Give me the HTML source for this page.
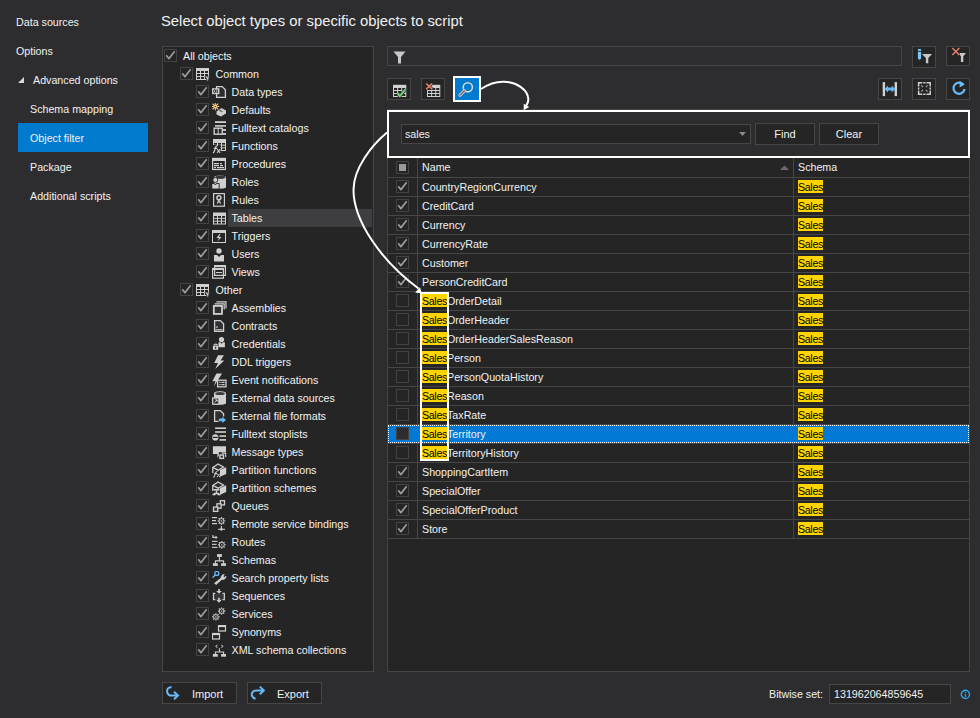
<!DOCTYPE html>
<html><head><meta charset="utf-8"><style>
html,body{margin:0;padding:0;}
body{width:980px;height:718px;background:#2d2d30;position:relative;overflow:hidden;font-family:"Liberation Sans",sans-serif;font-size:11px;color:#f1f1f1;}
.abs{position:absolute;}
.t{position:absolute;font-size:10.7px;line-height:13px;white-space:nowrap;}
.title{position:absolute;font-size:14.8px;line-height:18px;white-space:nowrap;color:#f1f1f1;}
.navsel{position:absolute;background:#007acc;}
.panel{position:absolute;background:#252526;border:1px solid #464647;}
.grid{position:absolute;background:#252526;border:1px solid #464647;}
.box{position:absolute;border:1px solid #464647;}
.cb{position:absolute;width:11px;height:11px;border:1px solid #434346;}
.cb svg{position:absolute;left:-1px;top:-1px;}
.ic{position:absolute;width:14px;height:14px;}
.ic svg{display:block;}
.btn{position:absolute;background:#252526;border:1px solid #464647;}
.btn svg{position:absolute;left:3px;top:3px;}
.pbtn{position:absolute;background:#252526;border:1px solid #464647;text-align:center;line-height:19px;}
</style></head><body>
<div class="navsel" style="left:18px;top:123px;width:130px;height:29px"></div>
<svg class="abs" style="left:17px;top:76px" width="8" height="8"><path d="M1 7 L7 7 L7 1 Z" fill="#d8d8d8"/></svg>
<div class="t" style="left:16px;top:16px;">Data sources</div>
<div class="t" style="left:16px;top:45px;">Options</div>
<div class="t" style="left:33px;top:74px;">Advanced options</div>
<div class="t" style="left:30px;top:103px;">Schema mapping</div>
<div class="t" style="left:30px;top:132px;">Object filter</div>
<div class="t" style="left:30px;top:161px;">Package</div>
<div class="t" style="left:30px;top:190px;">Additional scripts</div>
<div class="title" style="left:161px;top:12px">Select object types or specific objects to script</div>
<div class="panel" style="left:162px;top:46px;width:210px;height:624px"></div>
<div class="abs" style="left:228px;top:209px;width:144px;height:18px;background:#3e3e40"></div>
<div class="cb" style="left:164px;top:49px"><svg width="13" height="13" viewBox="0 0 13 13"><path d="M2.6 6.8 L4.9 9.6 L10.3 2.8" fill="none" stroke="#9c9c9c" stroke-width="1.7" stroke-linecap="round" stroke-linejoin="round"/></svg></div>
<div class="t" style="left:183px;top:50px;">All objects</div>
<div class="cb" style="left:180px;top:67px"><svg width="13" height="13" viewBox="0 0 13 13"><path d="M2.6 6.8 L4.9 9.6 L10.3 2.8" fill="none" stroke="#9c9c9c" stroke-width="1.7" stroke-linecap="round" stroke-linejoin="round"/></svg></div>
<div class="ic" style="left:196px;top:67px" data-i="Common"><svg width="16" height="16" viewBox="0 0 16 16"><rect x="0" y="1" width="13" height="12" fill="#d0d0d0"/><rect x="1.00" y="4.00" width="3.00" height="2.00" fill="#252526"/><rect x="5.00" y="4.00" width="3.00" height="2.00" fill="#252526"/><rect x="9.00" y="4.00" width="3.00" height="2.00" fill="#252526"/><rect x="1.00" y="7.00" width="3.00" height="2.00" fill="#252526"/><rect x="5.00" y="7.00" width="3.00" height="2.00" fill="#252526"/><rect x="9.00" y="7.00" width="3.00" height="2.00" fill="#252526"/><rect x="1.00" y="10.00" width="3.00" height="2.00" fill="#252526"/><rect x="5.00" y="10.00" width="3.00" height="2.00" fill="#252526"/><rect x="9.00" y="10.00" width="3.00" height="2.00" fill="#252526"/><path d="M8.8 9.8 H14.2 L12.3 12 V14.2 H10.7 V12 Z" fill="#d0d0d0" stroke="#252526" stroke-width="0.8"/></svg></div>
<div class="t" style="left:215.5px;top:68px;">Common</div>
<div class="cb" style="left:196px;top:85px"><svg width="13" height="13" viewBox="0 0 13 13"><path d="M2.6 6.8 L4.9 9.6 L10.3 2.8" fill="none" stroke="#9c9c9c" stroke-width="1.7" stroke-linecap="round" stroke-linejoin="round"/></svg></div>
<div class="ic" style="left:212px;top:85px" data-i="Data types"><svg width="16" height="16" viewBox="0 0 16 16"><path d="M4.6 1.6 H10.2 L13.4 4.8 V12.4 H4.6 Z" fill="#2c2c30" stroke="#d0d0d0" stroke-width="1.3"/><rect x="0" y="3.2" width="7.4" height="6" fill="#d0d0d0"/><ellipse cx="2.6" cy="6.2" rx="1" ry="1.7" fill="none" stroke="#252526" stroke-width="1"/><rect x="4.6" y="4.4" width="1.1" height="3.6" fill="#252526"/></svg></div>
<div class="t" style="left:231.5px;top:86px;">Data types</div>
<div class="cb" style="left:196px;top:103px"><svg width="13" height="13" viewBox="0 0 13 13"><path d="M2.6 6.8 L4.9 9.6 L10.3 2.8" fill="none" stroke="#9c9c9c" stroke-width="1.7" stroke-linecap="round" stroke-linejoin="round"/></svg></div>
<div class="ic" style="left:212px;top:103px" data-i="Defaults"><svg width="16" height="16" viewBox="0 0 16 16"><g stroke="#f2c27a" stroke-width="1.1" stroke-linecap="round"><path d="M3.3 0 V7 M-0.2 3.5 H6.8 M0.8 1 L5.8 6 M5.8 1 L0.8 6"/></g><circle cx="3.3" cy="3.5" r="1.5" fill="#f2c27a"/><circle cx="3.3" cy="3.5" r="0.6" fill="#252526"/><path d="M4.5 8.5 L9.5 5 L14 7.5 V10.5 L9 13.5 L4.5 11.5 Z" fill="#d0d0d0"/><path d="M8 6.5 L11 8.2 L9.5 9.2 L6.8 7.6 Z" fill="#707070"/></svg></div>
<div class="t" style="left:231.5px;top:104px;">Defaults</div>
<div class="cb" style="left:196px;top:121px"><svg width="13" height="13" viewBox="0 0 13 13"><path d="M2.6 6.8 L4.9 9.6 L10.3 2.8" fill="none" stroke="#9c9c9c" stroke-width="1.7" stroke-linecap="round" stroke-linejoin="round"/></svg></div>
<div class="ic" style="left:212px;top:121px" data-i="Fulltext catalogs"><svg width="16" height="16" viewBox="0 0 16 16"><rect x="3" y="0.2" width="11" height="1.8" fill="#d0d0d0"/><rect x="3" y="4.1" width="11" height="1.6" fill="#d0d0d0"/><rect x="10" y="8.1" width="4" height="1.8" fill="#d0d0d0"/><rect x="10" y="12" width="4" height="1.8" fill="#d0d0d0"/><rect x="1.5" y="6.5" width="9" height="7" fill="#252526"/><rect x="2.2" y="7.2" width="8" height="6" fill="none" stroke="#d0d0d0" stroke-width="1.4"/><path d="M6.2 6.8 V14" stroke="#d0d0d0" stroke-width="1"/></svg></div>
<div class="t" style="left:231.5px;top:122px;">Fulltext catalogs</div>
<div class="cb" style="left:196px;top:139px"><svg width="13" height="13" viewBox="0 0 13 13"><path d="M2.6 6.8 L4.9 9.6 L10.3 2.8" fill="none" stroke="#9c9c9c" stroke-width="1.7" stroke-linecap="round" stroke-linejoin="round"/></svg></div>
<div class="ic" style="left:212px;top:139px" data-i="Functions"><svg width="16" height="16" viewBox="0 0 16 16"><rect x="1" y="0" width="13" height="12" fill="#d0d0d0"/><rect x="2.00" y="4.00" width="3.00" height="1.67" fill="#252526"/><rect x="6.00" y="4.00" width="3.00" height="1.67" fill="#252526"/><rect x="10.00" y="4.00" width="3.00" height="1.67" fill="#252526"/><rect x="2.00" y="6.67" width="3.00" height="1.67" fill="#252526"/><rect x="6.00" y="6.67" width="3.00" height="1.67" fill="#252526"/><rect x="10.00" y="6.67" width="3.00" height="1.67" fill="#252526"/><rect x="2.00" y="9.33" width="3.00" height="1.67" fill="#252526"/><rect x="6.00" y="9.33" width="3.00" height="1.67" fill="#252526"/><rect x="10.00" y="9.33" width="3.00" height="1.67" fill="#252526"/><rect x="0" y="6" width="8.5" height="8" fill="#252526"/><path d="M1 14 C2.3 13.5 2.8 11 3.3 9 C3.7 7.3 4.3 6.5 6 6.5 M1.8 9.3 H5.2" fill="none" stroke="#d0d0d0" stroke-width="1.2"/><path d="M5 10 L8.2 13.8 M8.2 10 L5 13.8" stroke="#d0d0d0" stroke-width="1.1"/></svg></div>
<div class="t" style="left:231.5px;top:140px;">Functions</div>
<div class="cb" style="left:196px;top:157px"><svg width="13" height="13" viewBox="0 0 13 13"><path d="M2.6 6.8 L4.9 9.6 L10.3 2.8" fill="none" stroke="#9c9c9c" stroke-width="1.7" stroke-linecap="round" stroke-linejoin="round"/></svg></div>
<div class="ic" style="left:212px;top:157px" data-i="Procedures"><svg width="16" height="16" viewBox="0 0 16 16"><rect x="0.6" y="1.5" width="12.8" height="11" fill="none" stroke="#d0d0d0" stroke-width="1.2"/><rect x="0" y="0.9" width="14" height="3.1" fill="#d0d0d0"/><rect x="2" y="6" width="5" height="1.2" fill="#d0d0d0"/><rect x="8" y="6" width="2" height="1.2" fill="#d0d0d0"/><rect x="2" y="8" width="5" height="1.2" fill="#d0d0d0"/><rect x="8" y="8" width="3" height="1.2" fill="#d0d0d0"/><rect x="2" y="10" width="2" height="1.2" fill="#d0d0d0"/><rect x="5" y="10" width="7" height="1.2" fill="#d0d0d0"/></svg></div>
<div class="t" style="left:231.5px;top:158px;">Procedures</div>
<div class="cb" style="left:196px;top:175px"><svg width="13" height="13" viewBox="0 0 13 13"><path d="M2.6 6.8 L4.9 9.6 L10.3 2.8" fill="none" stroke="#9c9c9c" stroke-width="1.7" stroke-linecap="round" stroke-linejoin="round"/></svg></div>
<div class="ic" style="left:212px;top:175px" data-i="Roles"><svg width="16" height="16" viewBox="0 0 16 16"><path d="M2 2.4 C2 -0.3 14 -0.3 14 2.4 V12 C14 14.3 2 14.3 2 12 Z" fill="#d0d0d0"/><ellipse cx="8.4" cy="2.2" rx="5" ry="1.7" fill="#38383c"/><circle cx="3.3" cy="5" r="2.5" fill="#d0d0d0" stroke="#252526" stroke-width="0.9"/><path d="M-0.2 8.5 H2.4 L3.4 10 L4.4 8.5 H7.2 V14 H-0.2 Z" fill="#d0d0d0" stroke="#252526" stroke-width="0.9"/></svg></div>
<div class="t" style="left:231.5px;top:176px;">Roles</div>
<div class="cb" style="left:196px;top:193px"><svg width="13" height="13" viewBox="0 0 13 13"><path d="M2.6 6.8 L4.9 9.6 L10.3 2.8" fill="none" stroke="#9c9c9c" stroke-width="1.7" stroke-linecap="round" stroke-linejoin="round"/></svg></div>
<div class="ic" style="left:212px;top:193px" data-i="Rules"><svg width="16" height="16" viewBox="0 0 16 16"><rect x="1.6" y="0.6" width="10.8" height="12.6" fill="none" stroke="#d0d0d0" stroke-width="1.2"/><circle cx="6.9" cy="4.8" r="2" fill="none" stroke="#d0d0d0" stroke-width="1.5"/><path d="M5.9 6.8 L4.6 11.4 L6.9 9.6 L9.2 11.4 L7.9 6.8 Z" fill="#b8b8b8"/></svg></div>
<div class="t" style="left:231.5px;top:194px;">Rules</div>
<div class="cb" style="left:196px;top:211px"><svg width="13" height="13" viewBox="0 0 13 13"><path d="M2.6 6.8 L4.9 9.6 L10.3 2.8" fill="none" stroke="#9c9c9c" stroke-width="1.7" stroke-linecap="round" stroke-linejoin="round"/></svg></div>
<div class="ic" style="left:212px;top:211px" data-i="Tables"><svg width="16" height="16" viewBox="0 0 16 16"><rect x="1" y="1.5" width="13" height="12" fill="#d0d0d0"/><rect x="2.00" y="5.00" width="3.00" height="1.83" fill="#252526"/><rect x="6.00" y="5.00" width="3.00" height="1.83" fill="#252526"/><rect x="10.00" y="5.00" width="3.00" height="1.83" fill="#252526"/><rect x="2.00" y="7.83" width="3.00" height="1.83" fill="#252526"/><rect x="6.00" y="7.83" width="3.00" height="1.83" fill="#252526"/><rect x="10.00" y="7.83" width="3.00" height="1.83" fill="#252526"/><rect x="2.00" y="10.67" width="3.00" height="1.83" fill="#252526"/><rect x="6.00" y="10.67" width="3.00" height="1.83" fill="#252526"/><rect x="10.00" y="10.67" width="3.00" height="1.83" fill="#252526"/></svg></div>
<div class="t" style="left:231.5px;top:212px;">Tables</div>
<div class="cb" style="left:196px;top:229px"><svg width="13" height="13" viewBox="0 0 13 13"><path d="M2.6 6.8 L4.9 9.6 L10.3 2.8" fill="none" stroke="#9c9c9c" stroke-width="1.7" stroke-linecap="round" stroke-linejoin="round"/></svg></div>
<div class="ic" style="left:212px;top:229px" data-i="Triggers"><svg width="16" height="16" viewBox="0 0 16 16"><rect x="0.5" y="1.5" width="13" height="12" fill="none" stroke="#d0d0d0"/><rect x="0.5" y="1.5" width="13" height="2.5" fill="#d0d0d0"/><path d="M7.5 5 L4.5 9 H7 L5.5 12.5 L9.5 8 H7 L8.5 5 Z" fill="#d0d0d0"/></svg></div>
<div class="t" style="left:231.5px;top:230px;">Triggers</div>
<div class="cb" style="left:196px;top:247px"><svg width="13" height="13" viewBox="0 0 13 13"><path d="M2.6 6.8 L4.9 9.6 L10.3 2.8" fill="none" stroke="#9c9c9c" stroke-width="1.7" stroke-linecap="round" stroke-linejoin="round"/></svg></div>
<div class="ic" style="left:212px;top:247px" data-i="Users"><svg width="16" height="16" viewBox="0 0 16 16"><circle cx="7" cy="4" r="2.7" fill="#d0d0d0"/><path d="M2 8 H5 L7 10 L9 8 H12 V14.5 H2 Z" fill="#d0d0d0"/></svg></div>
<div class="t" style="left:231.5px;top:248px;">Users</div>
<div class="cb" style="left:196px;top:265px"><svg width="13" height="13" viewBox="0 0 13 13"><path d="M2.6 6.8 L4.9 9.6 L10.3 2.8" fill="none" stroke="#9c9c9c" stroke-width="1.7" stroke-linecap="round" stroke-linejoin="round"/></svg></div>
<div class="ic" style="left:212px;top:265px" data-i="Views"><svg width="16" height="16" viewBox="0 0 16 16"><rect x="2.6" y="0.6" width="10.8" height="9.8" fill="none" stroke="#d0d0d0" stroke-width="1.2"/><rect x="2" y="0" width="12" height="2.2" fill="#d0d0d0"/><rect x="0.6" y="3.6" width="10.8" height="9.6" fill="none" stroke="#d0d0d0" stroke-width="1.2"/><rect x="0" y="3" width="12" height="2" fill="#d0d0d0"/><rect x="4" y="7" width="6" height="1.1" fill="#d0d0d0"/></svg></div>
<div class="t" style="left:231.5px;top:266px;">Views</div>
<div class="cb" style="left:180px;top:283px"><svg width="13" height="13" viewBox="0 0 13 13"><path d="M2.6 6.8 L4.9 9.6 L10.3 2.8" fill="none" stroke="#9c9c9c" stroke-width="1.7" stroke-linecap="round" stroke-linejoin="round"/></svg></div>
<div class="ic" style="left:196px;top:283px" data-i="Other"><svg width="16" height="16" viewBox="0 0 16 16"><rect x="0" y="1" width="13" height="12" fill="#d0d0d0"/><rect x="1.00" y="4.00" width="3.00" height="2.00" fill="#252526"/><rect x="5.00" y="4.00" width="3.00" height="2.00" fill="#252526"/><rect x="9.00" y="4.00" width="3.00" height="2.00" fill="#252526"/><rect x="1.00" y="7.00" width="3.00" height="2.00" fill="#252526"/><rect x="5.00" y="7.00" width="3.00" height="2.00" fill="#252526"/><rect x="9.00" y="7.00" width="3.00" height="2.00" fill="#252526"/><rect x="1.00" y="10.00" width="3.00" height="2.00" fill="#252526"/><rect x="5.00" y="10.00" width="3.00" height="2.00" fill="#252526"/><rect x="9.00" y="10.00" width="3.00" height="2.00" fill="#252526"/><path d="M8.8 9.8 H14.2 L12.3 12 V14.2 H10.7 V12 Z" fill="#d0d0d0" stroke="#252526" stroke-width="0.8"/></svg></div>
<div class="t" style="left:215.5px;top:284px;">Other</div>
<div class="cb" style="left:196px;top:301px"><svg width="13" height="13" viewBox="0 0 13 13"><path d="M2.6 6.8 L4.9 9.6 L10.3 2.8" fill="none" stroke="#9c9c9c" stroke-width="1.7" stroke-linecap="round" stroke-linejoin="round"/></svg></div>
<div class="ic" style="left:212px;top:301px" data-i="Assemblies"><svg width="16" height="16" viewBox="0 0 16 16"><path d="M4.4 0.9 H14 V7.6" fill="none" stroke="#d0d0d0" stroke-width="1.2"/><path d="M2.6 2.9 H12.2 V8.6" fill="none" stroke="#d0d0d0" stroke-width="1.2"/><rect x="1.8" y="4.9" width="8.2" height="8" fill="#303034" stroke="#d0d0d0" stroke-width="1.8"/></svg></div>
<div class="t" style="left:231.5px;top:302px;">Assemblies</div>
<div class="cb" style="left:196px;top:319px"><svg width="13" height="13" viewBox="0 0 13 13"><path d="M2.6 6.8 L4.9 9.6 L10.3 2.8" fill="none" stroke="#9c9c9c" stroke-width="1.7" stroke-linecap="round" stroke-linejoin="round"/></svg></div>
<div class="ic" style="left:212px;top:319px" data-i="Contracts"><svg width="16" height="16" viewBox="0 0 16 16"><path d="M2.6 1.6 H8.4 L11.6 4.8 V12.4 H2.6 Z" fill="#303034" stroke="#d0d0d0" stroke-width="1.3"/><rect x="3.9" y="7" width="2" height="2" fill="#8a8a8a"/><rect x="3.5" y="10.2" width="7.2" height="1.1" fill="#d0d0d0"/></svg></div>
<div class="t" style="left:231.5px;top:320px;">Contracts</div>
<div class="cb" style="left:196px;top:337px"><svg width="13" height="13" viewBox="0 0 13 13"><path d="M2.6 6.8 L4.9 9.6 L10.3 2.8" fill="none" stroke="#9c9c9c" stroke-width="1.7" stroke-linecap="round" stroke-linejoin="round"/></svg></div>
<div class="ic" style="left:212px;top:337px" data-i="Credentials"><svg width="16" height="16" viewBox="0 0 16 16"><circle cx="9.5" cy="2.6" r="2.6" fill="#d0d0d0"/><path d="M6.5 5.2 H8.3 L9.6 6.8 L10.9 5.2 H12.9 V10.2 H6.5 Z" fill="#d0d0d0"/><path d="M1.9 8.3 A1.9 1.7 0 0 1 5.5 8.3" fill="none" stroke="#d0d0d0" stroke-width="1.1"/><rect x="0.9" y="8.6" width="5.3" height="4.2" fill="#d0d0d0"/><rect x="3" y="9.8" width="1.2" height="1.8" fill="#252526"/></svg></div>
<div class="t" style="left:231.5px;top:338px;">Credentials</div>
<div class="cb" style="left:196px;top:355px"><svg width="13" height="13" viewBox="0 0 13 13"><path d="M2.6 6.8 L4.9 9.6 L10.3 2.8" fill="none" stroke="#9c9c9c" stroke-width="1.7" stroke-linecap="round" stroke-linejoin="round"/></svg></div>
<div class="ic" style="left:212px;top:355px" data-i="DDL triggers"><svg width="16" height="16" viewBox="0 0 16 16"><path d="M6 0.2 H11.9 L8.6 5.6 H12.3 L3.2 14 L6 8 H2.2 Z" fill="#d0d0d0"/></svg></div>
<div class="t" style="left:231.5px;top:356px;">DDL triggers</div>
<div class="cb" style="left:196px;top:373px"><svg width="13" height="13" viewBox="0 0 13 13"><path d="M2.6 6.8 L4.9 9.6 L10.3 2.8" fill="none" stroke="#9c9c9c" stroke-width="1.7" stroke-linecap="round" stroke-linejoin="round"/></svg></div>
<div class="ic" style="left:212px;top:373px" data-i="Event notifications"><svg width="16" height="16" viewBox="0 0 16 16"><path d="M4.4 0.4 H10 L7.2 5 L1.7 13.6 L3.6 8.2 H0.4 Z" fill="#d0d0d0"/><rect x="5.6" y="7.2" width="8.4" height="6.6" fill="#252526" stroke="#d0d0d0" stroke-width="1.3"/><rect x="7.3" y="8.8" width="1.3" height="1.2" fill="#d0d0d0"/><rect x="9.4" y="8.8" width="3.2" height="1.2" fill="#d0d0d0"/><rect x="7.3" y="11" width="1.3" height="1.2" fill="#d0d0d0"/><rect x="9.4" y="11" width="3.2" height="1.2" fill="#d0d0d0"/></svg></div>
<div class="t" style="left:231.5px;top:374px;">Event notifications</div>
<div class="cb" style="left:196px;top:391px"><svg width="13" height="13" viewBox="0 0 13 13"><path d="M2.6 6.8 L4.9 9.6 L10.3 2.8" fill="none" stroke="#9c9c9c" stroke-width="1.7" stroke-linecap="round" stroke-linejoin="round"/></svg></div>
<div class="ic" style="left:212px;top:391px" data-i="External data sources"><svg width="16" height="16" viewBox="0 0 16 16"><path d="M2 2.4 C2 -0.4 14 -0.4 14 2.4 V12 C14 14.4 2 14.4 2 12 Z" fill="#d0d0d0"/><ellipse cx="8" cy="2.5" rx="4.8" ry="1.5" fill="#3a3a3e"/><rect x="0.7" y="7" width="6.2" height="6.2" fill="#252526" stroke="#d0d0d0" stroke-width="1.3"/><path d="M2.6 11.4 L5 9 M3.2 8.8 H5.2 V10.8" fill="none" stroke="#d0d0d0" stroke-width="1"/></svg></div>
<div class="t" style="left:231.5px;top:392px;">External data sources</div>
<div class="cb" style="left:196px;top:409px"><svg width="13" height="13" viewBox="0 0 13 13"><path d="M2.6 6.8 L4.9 9.6 L10.3 2.8" fill="none" stroke="#9c9c9c" stroke-width="1.7" stroke-linecap="round" stroke-linejoin="round"/></svg></div>
<div class="ic" style="left:212px;top:409px" data-i="External file formats"><svg width="16" height="16" viewBox="0 0 16 16"><path d="M2.6 1.6 H8.4 L11.6 4.8 V8 H6.5 V12.4 H2.6 Z" fill="#303034"/><path d="M6.5 12.4 H2.6 V1.6 H8.4 L11.6 4.8 V7.5" fill="none" stroke="#d0d0d0" stroke-width="1.3"/><path d="M6.9 9.6 H10.3 V7.8 L14 10.9 L10.3 14 V12.2 H6.9 Z" fill="#6ab8f5"/></svg></div>
<div class="t" style="left:231.5px;top:410px;">External file formats</div>
<div class="cb" style="left:196px;top:427px"><svg width="13" height="13" viewBox="0 0 13 13"><path d="M2.6 6.8 L4.9 9.6 L10.3 2.8" fill="none" stroke="#9c9c9c" stroke-width="1.7" stroke-linecap="round" stroke-linejoin="round"/></svg></div>
<div class="ic" style="left:212px;top:427px" data-i="Fulltext stoplists"><svg width="16" height="16" viewBox="0 0 16 16"><rect x="3.1" y="0.4" width="10.9" height="1.6" fill="#d0d0d0"/><rect x="3.1" y="4.2" width="10.9" height="1.6" fill="#d0d0d0"/><rect x="7.5" y="8.3" width="6.5" height="1.6" fill="#d0d0d0"/><rect x="7.5" y="12.1" width="6.5" height="1.6" fill="#d0d0d0"/><circle cx="3.3" cy="10.4" r="3.6" fill="#252526"/><circle cx="3.3" cy="10.4" r="3.1" fill="#d0d0d0"/><rect x="0.8" y="9.8" width="5" height="1.2" fill="#252526"/></svg></div>
<div class="t" style="left:231.5px;top:428px;">Fulltext stoplists</div>
<div class="cb" style="left:196px;top:445px"><svg width="13" height="13" viewBox="0 0 13 13"><path d="M2.6 6.8 L4.9 9.6 L10.3 2.8" fill="none" stroke="#9c9c9c" stroke-width="1.7" stroke-linecap="round" stroke-linejoin="round"/></svg></div>
<div class="ic" style="left:212px;top:445px" data-i="Message types"><svg width="16" height="16" viewBox="0 0 16 16"><path d="M0.9 1.2 H14 V9.1 H8 L5.4 12.9 V9.1 H0.9 Z" fill="#d0d0d0"/><rect x="6.8" y="7.2" width="7.8" height="7" fill="#252526"/><path d="M9.8 8.1 H13.7 V12" fill="none" stroke="#d0d0d0" stroke-width="1.1"/><rect x="7.9" y="10" width="3.6" height="3.4" fill="none" stroke="#d0d0d0" stroke-width="1.4"/></svg></div>
<div class="t" style="left:231.5px;top:446px;">Message types</div>
<div class="cb" style="left:196px;top:463px"><svg width="13" height="13" viewBox="0 0 13 13"><path d="M2.6 6.8 L4.9 9.6 L10.3 2.8" fill="none" stroke="#9c9c9c" stroke-width="1.7" stroke-linecap="round" stroke-linejoin="round"/></svg></div>
<div class="ic" style="left:212px;top:463px" data-i="Partition functions"><svg width="16" height="16" viewBox="0 0 16 16"><path d="M0.8 4.5 L6 1 L11.5 4 L6.2 7.2 Z" fill="#303034" stroke="#d0d0d0" stroke-width="1.3"/><path d="M0.8 4.5 V10" stroke="#d0d0d0" stroke-width="1.3"/><path d="M8 7 L14.2 4.2 V11 L8 13.8 Z" fill="#d0d0d0"/><path d="M1.5 14.5 C2.5 13.8 3 11.5 3.5 10 C3.8 9 4.3 8.5 5.5 8.5 M2.3 10.6 H5" fill="none" stroke="#d0d0d0" stroke-width="1.1"/><path d="M5 10.5 L8 14.2 M8 10.5 L5 14.2" stroke="#d0d0d0" stroke-width="1"/></svg></div>
<div class="t" style="left:231.5px;top:464px;">Partition functions</div>
<div class="cb" style="left:196px;top:481px"><svg width="13" height="13" viewBox="0 0 13 13"><path d="M2.6 6.8 L4.9 9.6 L10.3 2.8" fill="none" stroke="#9c9c9c" stroke-width="1.7" stroke-linecap="round" stroke-linejoin="round"/></svg></div>
<div class="ic" style="left:212px;top:481px" data-i="Partition schemes"><svg width="16" height="16" viewBox="0 0 16 16"><path d="M0.8 4.5 L6 1 L11.5 4 L6.2 7.2 Z" fill="#303034" stroke="#d0d0d0" stroke-width="1.3"/><path d="M0.8 4.5 V10" stroke="#d0d0d0" stroke-width="1.3"/><path d="M8 7 L14.2 4.2 V11 L8 13.8 Z" fill="#d0d0d0"/><rect x="1.5" y="8" width="6" height="1.6" fill="#d0d0d0"/><path d="M4.5 9.5 V12.5 M2 12.5 H7" stroke="#d0d0d0" stroke-width="1.4" fill="none"/><rect x="0.5" y="12.5" width="3" height="1.8" fill="#d0d0d0"/><rect x="5.5" y="12.5" width="3" height="1.8" fill="#d0d0d0"/></svg></div>
<div class="t" style="left:231.5px;top:482px;">Partition schemes</div>
<div class="cb" style="left:196px;top:499px"><svg width="13" height="13" viewBox="0 0 13 13"><path d="M2.6 6.8 L4.9 9.6 L10.3 2.8" fill="none" stroke="#9c9c9c" stroke-width="1.7" stroke-linecap="round" stroke-linejoin="round"/></svg></div>
<div class="ic" style="left:212px;top:499px" data-i="Queues"><svg width="16" height="16" viewBox="0 0 16 16"><rect x="8.3" y="1.7" width="4.2" height="4.2" fill="none" stroke="#d0d0d0" stroke-width="1.3"/><rect x="4.9" y="4.8" width="4.2" height="4.4" fill="#303034" stroke="#d0d0d0" stroke-width="1.3"/><rect x="1.5" y="8.1" width="4.3" height="4.3" fill="#303034" stroke="#d0d0d0" stroke-width="1.3"/></svg></div>
<div class="t" style="left:231.5px;top:500px;">Queues</div>
<div class="cb" style="left:196px;top:517px"><svg width="13" height="13" viewBox="0 0 13 13"><path d="M2.6 6.8 L4.9 9.6 L10.3 2.8" fill="none" stroke="#9c9c9c" stroke-width="1.7" stroke-linecap="round" stroke-linejoin="round"/></svg></div>
<div class="ic" style="left:212px;top:517px" data-i="Remote service bindings"><svg width="16" height="16" viewBox="0 0 16 16"><rect x="0" y="0" width="5" height="1.2" fill="#d0d0d0"/><rect x="0" y="3" width="4" height="1.2" fill="#d0d0d0"/><rect x="0" y="6" width="5" height="1.2" fill="#d0d0d0"/><circle cx="9.4" cy="4" r="2.5" fill="none" stroke="#d0d0d0" stroke-width="1"/><line x1="12.10" y1="4.00" x2="13.30" y2="4.00" stroke="#d0d0d0" stroke-width="1.1"/><line x1="11.31" y1="5.91" x2="12.16" y2="6.76" stroke="#d0d0d0" stroke-width="1.1"/><line x1="9.40" y1="6.70" x2="9.40" y2="7.90" stroke="#d0d0d0" stroke-width="1.1"/><line x1="7.49" y1="5.91" x2="6.64" y2="6.76" stroke="#d0d0d0" stroke-width="1.1"/><line x1="6.70" y1="4.00" x2="5.50" y2="4.00" stroke="#d0d0d0" stroke-width="1.1"/><line x1="7.49" y1="2.09" x2="6.64" y2="1.24" stroke="#d0d0d0" stroke-width="1.1"/><line x1="9.40" y1="1.30" x2="9.40" y2="0.10" stroke="#d0d0d0" stroke-width="1.1"/><line x1="11.31" y1="2.09" x2="12.16" y2="1.24" stroke="#d0d0d0" stroke-width="1.1"/><circle cx="9.4" cy="4" r="0.9" fill="#9a9a9a"/><path d="M9.4 9 V13.5 M6 12.3 H13" stroke="#d0d0d0" stroke-width="1.1"/><circle cx="9.4" cy="12.2" r="1.2" fill="#d0d0d0"/></svg></div>
<div class="t" style="left:231.5px;top:518px;">Remote service bindings</div>
<div class="cb" style="left:196px;top:535px"><svg width="13" height="13" viewBox="0 0 13 13"><path d="M2.6 6.8 L4.9 9.6 L10.3 2.8" fill="none" stroke="#9c9c9c" stroke-width="1.7" stroke-linecap="round" stroke-linejoin="round"/></svg></div>
<div class="ic" style="left:212px;top:535px" data-i="Routes"><svg width="16" height="16" viewBox="0 0 16 16"><path d="M0.9 0 V2.4 H4" fill="none" stroke="#d0d0d0" stroke-width="1.1"/><path d="M3.6 0.5 L5.6 2.4 L3.6 4.3 Z" fill="#d0d0d0"/><rect x="0" y="5.8" width="5.5" height="1.1" fill="#d0d0d0"/><rect x="0" y="8.8" width="4.5" height="1.1" fill="#d0d0d0"/><rect x="0" y="11.8" width="5.5" height="1.1" fill="#d0d0d0"/><circle cx="9.8" cy="9.8" r="2.5" fill="none" stroke="#d0d0d0" stroke-width="1"/><line x1="12.50" y1="9.80" x2="13.70" y2="9.80" stroke="#d0d0d0" stroke-width="1.1"/><line x1="11.71" y1="11.71" x2="12.56" y2="12.56" stroke="#d0d0d0" stroke-width="1.1"/><line x1="9.80" y1="12.50" x2="9.80" y2="13.70" stroke="#d0d0d0" stroke-width="1.1"/><line x1="7.89" y1="11.71" x2="7.04" y2="12.56" stroke="#d0d0d0" stroke-width="1.1"/><line x1="7.10" y1="9.80" x2="5.90" y2="9.80" stroke="#d0d0d0" stroke-width="1.1"/><line x1="7.89" y1="7.89" x2="7.04" y2="7.04" stroke="#d0d0d0" stroke-width="1.1"/><line x1="9.80" y1="7.10" x2="9.80" y2="5.90" stroke="#d0d0d0" stroke-width="1.1"/><line x1="11.71" y1="7.89" x2="12.56" y2="7.04" stroke="#d0d0d0" stroke-width="1.1"/><circle cx="9.8" cy="9.8" r="0.9" fill="#9a9a9a"/></svg></div>
<div class="t" style="left:231.5px;top:536px;">Routes</div>
<div class="cb" style="left:196px;top:553px"><svg width="13" height="13" viewBox="0 0 13 13"><path d="M2.6 6.8 L4.9 9.6 L10.3 2.8" fill="none" stroke="#9c9c9c" stroke-width="1.7" stroke-linecap="round" stroke-linejoin="round"/></svg></div>
<div class="ic" style="left:212px;top:553px" data-i="Schemas"><svg width="16" height="16" viewBox="0 0 16 16"><rect x="5" y="1.1" width="4.9" height="2.8" fill="#d0d0d0"/><path d="M7.4 3.8 V7.9 M3.4 7.9 H11.6 M3.4 7.4 V10.4 M11.6 7.4 V10.4" fill="none" stroke="#d0d0d0" stroke-width="1.1"/><rect x="0.9" y="10.2" width="4.9" height="2.7" fill="#d0d0d0"/><rect x="9.1" y="10.2" width="4.9" height="2.7" fill="#d0d0d0"/></svg></div>
<div class="t" style="left:231.5px;top:554px;">Schemas</div>
<div class="cb" style="left:196px;top:571px"><svg width="13" height="13" viewBox="0 0 13 13"><path d="M2.6 6.8 L4.9 9.6 L10.3 2.8" fill="none" stroke="#9c9c9c" stroke-width="1.7" stroke-linecap="round" stroke-linejoin="round"/></svg></div>
<div class="ic" style="left:212px;top:571px" data-i="Search property lists"><svg width="16" height="16" viewBox="0 0 16 16"><circle cx="4.8" cy="2.4" r="2" fill="none" stroke="#6ab8f5" stroke-width="1.3"/><path d="M3.4 3.9 L0.6 6.4" stroke="#6ab8f5" stroke-width="1.4"/><path d="M12.2 3.6 C10.2 3.6 8.8 5.2 9.2 7 L2.6 12.2 L4 13.6 L9.8 8.4 C11.8 9 14 7.6 14 5.2 L12.4 6.4 L10.9 5.4 Z" fill="#d0d0d0" stroke="#d0d0d0" stroke-width="0.8" stroke-linejoin="round"/></svg></div>
<div class="t" style="left:231.5px;top:572px;">Search property lists</div>
<div class="cb" style="left:196px;top:589px"><svg width="13" height="13" viewBox="0 0 13 13"><path d="M2.6 6.8 L4.9 9.6 L10.3 2.8" fill="none" stroke="#9c9c9c" stroke-width="1.7" stroke-linecap="round" stroke-linejoin="round"/></svg></div>
<div class="ic" style="left:212px;top:589px" data-i="Sequences"><svg width="16" height="16" viewBox="0 0 16 16"><rect x="2.5" y="5" width="8.5" height="5" fill="#38383c"/><path d="M3.3 4.3 H1.5 V10.6 H3.3 M10.5 4.3 H12.3 V10.6 H10.5" fill="none" stroke="#d0d0d0" stroke-width="1.3"/><path d="M6.2 0 H7.8 V2 H9.8 L7 4.8 L4.2 2 H6.2 Z" fill="#d0d0d0"/><path d="M6.2 8.8 H7.8 V10.8 H9.8 L7 13.8 L4.2 10.8 H6.2 Z" fill="#d0d0d0"/></svg></div>
<div class="t" style="left:231.5px;top:590px;">Sequences</div>
<div class="cb" style="left:196px;top:607px"><svg width="13" height="13" viewBox="0 0 13 13"><path d="M2.6 6.8 L4.9 9.6 L10.3 2.8" fill="none" stroke="#9c9c9c" stroke-width="1.7" stroke-linecap="round" stroke-linejoin="round"/></svg></div>
<div class="ic" style="left:212px;top:607px" data-i="Services"><svg width="16" height="16" viewBox="0 0 16 16"><circle cx="9.6" cy="4.1" r="2.3" fill="none" stroke="#d0d0d0" stroke-width="1"/><line x1="12.10" y1="4.10" x2="13.30" y2="4.10" stroke="#d0d0d0" stroke-width="1.1"/><line x1="11.37" y1="5.87" x2="12.22" y2="6.72" stroke="#d0d0d0" stroke-width="1.1"/><line x1="9.60" y1="6.60" x2="9.60" y2="7.80" stroke="#d0d0d0" stroke-width="1.1"/><line x1="7.83" y1="5.87" x2="6.98" y2="6.72" stroke="#d0d0d0" stroke-width="1.1"/><line x1="7.10" y1="4.10" x2="5.90" y2="4.10" stroke="#d0d0d0" stroke-width="1.1"/><line x1="7.83" y1="2.33" x2="6.98" y2="1.48" stroke="#d0d0d0" stroke-width="1.1"/><line x1="9.60" y1="1.60" x2="9.60" y2="0.40" stroke="#d0d0d0" stroke-width="1.1"/><line x1="11.37" y1="2.33" x2="12.22" y2="1.48" stroke="#d0d0d0" stroke-width="1.1"/><circle cx="9.6" cy="4.1" r="0.9" fill="#9a9a9a"/><circle cx="3.9" cy="9.9" r="2.3" fill="none" stroke="#d0d0d0" stroke-width="1"/><line x1="6.40" y1="9.90" x2="7.60" y2="9.90" stroke="#d0d0d0" stroke-width="1.1"/><line x1="5.67" y1="11.67" x2="6.52" y2="12.52" stroke="#d0d0d0" stroke-width="1.1"/><line x1="3.90" y1="12.40" x2="3.90" y2="13.60" stroke="#d0d0d0" stroke-width="1.1"/><line x1="2.13" y1="11.67" x2="1.28" y2="12.52" stroke="#d0d0d0" stroke-width="1.1"/><line x1="1.40" y1="9.90" x2="0.20" y2="9.90" stroke="#d0d0d0" stroke-width="1.1"/><line x1="2.13" y1="8.13" x2="1.28" y2="7.28" stroke="#d0d0d0" stroke-width="1.1"/><line x1="3.90" y1="7.40" x2="3.90" y2="6.20" stroke="#d0d0d0" stroke-width="1.1"/><line x1="5.67" y1="8.13" x2="6.52" y2="7.28" stroke="#d0d0d0" stroke-width="1.1"/><circle cx="3.9" cy="9.9" r="0.9" fill="#9a9a9a"/></svg></div>
<div class="t" style="left:231.5px;top:608px;">Services</div>
<div class="cb" style="left:196px;top:625px"><svg width="13" height="13" viewBox="0 0 13 13"><path d="M2.6 6.8 L4.9 9.6 L10.3 2.8" fill="none" stroke="#9c9c9c" stroke-width="1.7" stroke-linecap="round" stroke-linejoin="round"/></svg></div>
<div class="ic" style="left:212px;top:625px" data-i="Synonyms"><svg width="16" height="16" viewBox="0 0 16 16"><rect x="6.5" y="0.5" width="7" height="5.5" fill="none" stroke="#d0d0d0" stroke-width="1.2"/><rect x="6.5" y="0.5" width="7" height="1.6" fill="#d0d0d0"/><rect x="0.5" y="8.5" width="7" height="5.5" fill="none" stroke="#d0d0d0" stroke-width="1.2"/><rect x="0.5" y="8.5" width="7" height="1.6" fill="#d0d0d0"/></svg></div>
<div class="t" style="left:231.5px;top:626px;">Synonyms</div>
<div class="cb" style="left:196px;top:643px"><svg width="13" height="13" viewBox="0 0 13 13"><path d="M2.6 6.8 L4.9 9.6 L10.3 2.8" fill="none" stroke="#9c9c9c" stroke-width="1.7" stroke-linecap="round" stroke-linejoin="round"/></svg></div>
<div class="ic" style="left:212px;top:643px" data-i="XML schema collections"><svg width="16" height="16" viewBox="0 0 16 16"><path d="M5.4 1.8 L3.9 3.3 L5.4 4.8 M9.3 1.8 L10.8 3.3 L9.3 4.8" fill="none" stroke="#a0a0a0" stroke-width="1.2"/><path d="M7.4 5.2 V9 M3.4 9 H11.6 M3.4 8.5 V11.2 M11.6 8.5 V11.2" fill="none" stroke="#d0d0d0" stroke-width="1.1"/><rect x="0.9" y="11" width="4.9" height="2.7" fill="#d0d0d0"/><rect x="9.1" y="11" width="4.9" height="2.7" fill="#d0d0d0"/></svg></div>
<div class="t" style="left:231.5px;top:644px;">XML schema collections</div>
<div class="box" style="left:387px;top:46px;width:513px;height:18px"></div>
<svg class="abs" style="left:393px;top:51px" width="14" height="13"><path d="M0.5 0.5 H12.5 L8 6 V12.5 H5 V6 Z" fill="#c8c8c8"/></svg>
<div class="btn" style="left:912px;top:46px;width:22px;height:20px;"><svg style="left:-1px;top:-1px" width="24" height="22" viewBox="0 0 24 22"><rect x="5.9" y="3" width="3.2" height="1.8" fill="#7cc4fa"/><path d="M5.9 5.8 H9.1 V12.4 L7.5 14 L5.9 12.4 Z" fill="#7cc4fa"/><path d="M9.9 7.9 H20.1 L16.3 12 V17.3 H13.9 V12 Z" fill="#c8c8c8"/></svg></div>
<div class="btn" style="left:946px;top:46px;width:22px;height:18px;"><svg style="left:-1px;top:-1px" width="24" height="22" viewBox="0 0 24 22"><path d="M11.9 7 H20 L17.3 10.3 V16 H14.9 V10.3 Z" fill="#c8c8c8"/><path d="M6.3 2 L13.3 9 M13.3 2 L6.3 9" stroke="#252526" stroke-width="2.6"/><path d="M6.3 2 L13.3 9 M13.3 2 L6.3 9" stroke="#e8806a" stroke-width="1.5"/></svg></div>
<div class="btn" style="left:387px;top:78px;width:22px;height:20px;"><svg style="left:-1px;top:-1px" width="24" height="22" viewBox="0 0 24 22"><rect x="6" y="6.8" width="13.3" height="12.2" fill="#d0d0d0"/><rect x="7.00" y="10.00" width="3.10" height="2.00" fill="#252526"/><rect x="11.10" y="10.00" width="3.10" height="2.00" fill="#252526"/><rect x="15.20" y="10.00" width="3.10" height="2.00" fill="#252526"/><rect x="7.00" y="13.00" width="3.10" height="2.00" fill="#252526"/><rect x="11.10" y="13.00" width="3.10" height="2.00" fill="#252526"/><rect x="15.20" y="13.00" width="3.10" height="2.00" fill="#252526"/><rect x="7.00" y="16.00" width="3.10" height="2.00" fill="#252526"/><rect x="11.10" y="16.00" width="3.10" height="2.00" fill="#252526"/><rect x="15.20" y="16.00" width="3.10" height="2.00" fill="#252526"/><path d="M10.5 15.2 L12.8 18.2 L18.3 11.3" fill="none" stroke="#252526" stroke-width="3.2"/><path d="M10.5 15.2 L12.8 18.2 L18.3 11.3" fill="none" stroke="#76d27a" stroke-width="1.9"/></svg></div>
<div class="btn" style="left:421px;top:78px;width:22px;height:20px;"><svg style="left:-1px;top:-1px" width="24" height="22" viewBox="0 0 24 22"><rect x="6" y="6.8" width="13.3" height="12.2" fill="#d0d0d0"/><rect x="7.00" y="10.00" width="3.10" height="2.00" fill="#252526"/><rect x="11.10" y="10.00" width="3.10" height="2.00" fill="#252526"/><rect x="15.20" y="10.00" width="3.10" height="2.00" fill="#252526"/><rect x="7.00" y="13.00" width="3.10" height="2.00" fill="#252526"/><rect x="11.10" y="13.00" width="3.10" height="2.00" fill="#252526"/><rect x="15.20" y="13.00" width="3.10" height="2.00" fill="#252526"/><rect x="7.00" y="16.00" width="3.10" height="2.00" fill="#252526"/><rect x="11.10" y="16.00" width="3.10" height="2.00" fill="#252526"/><rect x="15.20" y="16.00" width="3.10" height="2.00" fill="#252526"/><path d="M5.2 5.5 L11.2 11.2 M11.2 5.5 L5.2 11.2" stroke="#252526" stroke-width="3"/><path d="M5.2 5.5 L11.2 11.2 M11.2 5.5 L5.2 11.2" stroke="#e8806a" stroke-width="1.6"/></svg></div>
<div class="abs" style="left:453px;top:76px;width:24px;height:22px;border:2px solid #fff;background:#007acc"><svg width="24" height="22" viewBox="0 0 24 22"><circle cx="12.8" cy="9.3" r="4.6" fill="none" stroke="#d8d8d8" stroke-width="1.6"/><path d="M9.3 12.8 L5 17.2" stroke="#d0d0d0" stroke-width="3.2" stroke-linecap="round"/><path d="M9.3 12.8 L5 17.2" stroke="#5a5a5a" stroke-width="1.2" stroke-linecap="round"/></svg></div>
<div class="btn" style="left:878px;top:78px;width:22px;height:20px;"><svg style="left:-1px;top:-1px" width="24" height="22" viewBox="0 0 24 22"><rect x="4.7" y="4.1" width="2.4" height="14" fill="#d0d0d0"/><rect x="16.6" y="4.1" width="2.4" height="14" fill="#d0d0d0"/><path d="M6.5 11.1 L10 7.6 V9.6 H13.7 V7.6 L17.2 11.1 L13.7 14.6 V12.6 H10 V14.6 Z" fill="#6ab8f5"/></svg></div>
<div class="btn" style="left:912px;top:78px;width:22px;height:20px;"><svg style="left:-1px;top:-1px" width="24" height="22" viewBox="0 0 24 22"><path d="M6.6 8.4 V4.7 H10.3 M14.5 4.7 H18.2 V8.4 M18.2 12.6 V16.3 H14.5 M10.3 16.3 H6.6 V12.6 M11.3 4.7 H13.5 M18.2 9.4 V11.6 M13.5 16.3 H11.3 M6.6 11.6 V9.4" fill="none" stroke="#d0d0d0" stroke-width="1.5"/><path d="M9.2 7.3 L11 9.1 M15.6 7.3 L13.8 9.1 M9.2 13.7 L11 11.9 M15.6 13.7 L13.8 11.9" stroke="#a8a8a8" stroke-width="1.1"/></svg></div>
<div class="btn" style="left:946px;top:78px;width:22px;height:20px;"><svg style="left:-1px;top:-1px" width="24" height="22" viewBox="0 0 24 22"><path d="M17.4 6.6 A5.6 5.6 0 1 0 18.6 11" fill="none" stroke="#6ab8f5" stroke-width="2.2"/><path d="M13.6 2.8 L18.8 6.4 L13.6 9.6 Z" fill="#6ab8f5"/></svg></div>
<div class="grid" style="left:387px;top:109px;width:581px;height:561px"></div>
<div class="abs" style="left:388px;top:110px;width:581px;height:48px;background:#2d2d30"></div>
<div class="box" style="left:401px;top:124px;width:348px;height:18px;background:#252526"></div>
<div class="t" style="left:405px;top:128px;">sales</div>
<svg class="abs" style="left:739px;top:132px" width="8" height="5"><path d="M0 0 H7 L3.5 4 Z" fill="#8a8a8a"/></svg>
<div class="pbtn" style="left:755px;top:123px;width:58px;height:20px;line-height:21px">Find</div>
<div class="pbtn" style="left:819px;top:123px;width:58px;height:20px;line-height:21px">Clear</div>
<div class="abs" style="left:388px;top:177px;width:581px;height:1px;background:#464647"></div>
<div class="abs" style="left:417px;top:158px;width:1px;height:381px;background:#464647"></div>
<div class="abs" style="left:793px;top:158px;width:1px;height:381px;background:#464647"></div>
<div class="cb" style="left:396px;top:161px"><div style="position:absolute;left:2px;top:2px;width:7px;height:7px;background:#9a9a9a"></div></div>
<div class="t" style="left:422px;top:161px;">Name</div>
<svg class="abs" style="left:780px;top:165px" width="10" height="6"><path d="M0 5 H9 L4.5 0.5 Z" fill="#6a6a6a"/></svg>
<div class="t" style="left:798px;top:161px;">Schema</div>
<div class="abs" style="left:388px;top:196px;width:581px;height:1px;background:#464647"></div>
<div class="cb" style="left:396px;top:180px"><svg width="13" height="13" viewBox="0 0 13 13"><path d="M2.6 6.8 L4.9 9.6 L10.3 2.8" fill="none" stroke="#9c9c9c" stroke-width="1.7" stroke-linecap="round" stroke-linejoin="round"/></svg></div>
<div class="t" style="left:422px;top:181px;">CountryRegionCurrency</div>
<div class="abs" style="left:798px;top:180px;width:25px;height:13px;background:#ffd400"></div>
<div class="t" style="left:798px;top:181px;"><span style="color:#000;letter-spacing:-0.35px">Sales</span></div>
<div class="abs" style="left:388px;top:215px;width:581px;height:1px;background:#464647"></div>
<div class="cb" style="left:396px;top:199px"><svg width="13" height="13" viewBox="0 0 13 13"><path d="M2.6 6.8 L4.9 9.6 L10.3 2.8" fill="none" stroke="#9c9c9c" stroke-width="1.7" stroke-linecap="round" stroke-linejoin="round"/></svg></div>
<div class="t" style="left:422px;top:200px;">CreditCard</div>
<div class="abs" style="left:798px;top:199px;width:25px;height:13px;background:#ffd400"></div>
<div class="t" style="left:798px;top:200px;"><span style="color:#000;letter-spacing:-0.35px">Sales</span></div>
<div class="abs" style="left:388px;top:234px;width:581px;height:1px;background:#464647"></div>
<div class="cb" style="left:396px;top:218px"><svg width="13" height="13" viewBox="0 0 13 13"><path d="M2.6 6.8 L4.9 9.6 L10.3 2.8" fill="none" stroke="#9c9c9c" stroke-width="1.7" stroke-linecap="round" stroke-linejoin="round"/></svg></div>
<div class="t" style="left:422px;top:219px;">Currency</div>
<div class="abs" style="left:798px;top:218px;width:25px;height:13px;background:#ffd400"></div>
<div class="t" style="left:798px;top:219px;"><span style="color:#000;letter-spacing:-0.35px">Sales</span></div>
<div class="abs" style="left:388px;top:253px;width:581px;height:1px;background:#464647"></div>
<div class="cb" style="left:396px;top:237px"><svg width="13" height="13" viewBox="0 0 13 13"><path d="M2.6 6.8 L4.9 9.6 L10.3 2.8" fill="none" stroke="#9c9c9c" stroke-width="1.7" stroke-linecap="round" stroke-linejoin="round"/></svg></div>
<div class="t" style="left:422px;top:238px;">CurrencyRate</div>
<div class="abs" style="left:798px;top:237px;width:25px;height:13px;background:#ffd400"></div>
<div class="t" style="left:798px;top:238px;"><span style="color:#000;letter-spacing:-0.35px">Sales</span></div>
<div class="abs" style="left:388px;top:272px;width:581px;height:1px;background:#464647"></div>
<div class="cb" style="left:396px;top:256px"><svg width="13" height="13" viewBox="0 0 13 13"><path d="M2.6 6.8 L4.9 9.6 L10.3 2.8" fill="none" stroke="#9c9c9c" stroke-width="1.7" stroke-linecap="round" stroke-linejoin="round"/></svg></div>
<div class="t" style="left:422px;top:257px;">Customer</div>
<div class="abs" style="left:798px;top:256px;width:25px;height:13px;background:#ffd400"></div>
<div class="t" style="left:798px;top:257px;"><span style="color:#000;letter-spacing:-0.35px">Sales</span></div>
<div class="abs" style="left:388px;top:291px;width:581px;height:1px;background:#464647"></div>
<div class="cb" style="left:396px;top:275px"><svg width="13" height="13" viewBox="0 0 13 13"><path d="M2.6 6.8 L4.9 9.6 L10.3 2.8" fill="none" stroke="#9c9c9c" stroke-width="1.7" stroke-linecap="round" stroke-linejoin="round"/></svg></div>
<div class="t" style="left:422px;top:276px;">PersonCreditCard</div>
<div class="abs" style="left:798px;top:275px;width:25px;height:13px;background:#ffd400"></div>
<div class="t" style="left:798px;top:276px;"><span style="color:#000;letter-spacing:-0.35px">Sales</span></div>
<div class="abs" style="left:388px;top:310px;width:581px;height:1px;background:#464647"></div>
<div class="cb" style="left:396px;top:294px"></div>
<div class="abs" style="left:422px;top:294px;width:25px;height:13px;background:#ffd400"></div>
<div class="t" style="left:422px;top:295px;"><span style="color:#000;letter-spacing:-0.35px">Sales</span>OrderDetail</div>
<div class="abs" style="left:798px;top:294px;width:25px;height:13px;background:#ffd400"></div>
<div class="t" style="left:798px;top:295px;"><span style="color:#000;letter-spacing:-0.35px">Sales</span></div>
<div class="abs" style="left:388px;top:329px;width:581px;height:1px;background:#464647"></div>
<div class="cb" style="left:396px;top:313px"></div>
<div class="abs" style="left:422px;top:313px;width:25px;height:13px;background:#ffd400"></div>
<div class="t" style="left:422px;top:314px;"><span style="color:#000;letter-spacing:-0.35px">Sales</span>OrderHeader</div>
<div class="abs" style="left:798px;top:313px;width:25px;height:13px;background:#ffd400"></div>
<div class="t" style="left:798px;top:314px;"><span style="color:#000;letter-spacing:-0.35px">Sales</span></div>
<div class="abs" style="left:388px;top:348px;width:581px;height:1px;background:#464647"></div>
<div class="cb" style="left:396px;top:332px"></div>
<div class="abs" style="left:422px;top:332px;width:25px;height:13px;background:#ffd400"></div>
<div class="t" style="left:422px;top:333px;"><span style="color:#000;letter-spacing:-0.35px">Sales</span>OrderHeaderSalesReason</div>
<div class="abs" style="left:798px;top:332px;width:25px;height:13px;background:#ffd400"></div>
<div class="t" style="left:798px;top:333px;"><span style="color:#000;letter-spacing:-0.35px">Sales</span></div>
<div class="abs" style="left:388px;top:367px;width:581px;height:1px;background:#464647"></div>
<div class="cb" style="left:396px;top:351px"></div>
<div class="abs" style="left:422px;top:351px;width:25px;height:13px;background:#ffd400"></div>
<div class="t" style="left:422px;top:352px;"><span style="color:#000;letter-spacing:-0.35px">Sales</span>Person</div>
<div class="abs" style="left:798px;top:351px;width:25px;height:13px;background:#ffd400"></div>
<div class="t" style="left:798px;top:352px;"><span style="color:#000;letter-spacing:-0.35px">Sales</span></div>
<div class="abs" style="left:388px;top:386px;width:581px;height:1px;background:#464647"></div>
<div class="cb" style="left:396px;top:370px"></div>
<div class="abs" style="left:422px;top:370px;width:25px;height:13px;background:#ffd400"></div>
<div class="t" style="left:422px;top:371px;"><span style="color:#000;letter-spacing:-0.35px">Sales</span>PersonQuotaHistory</div>
<div class="abs" style="left:798px;top:370px;width:25px;height:13px;background:#ffd400"></div>
<div class="t" style="left:798px;top:371px;"><span style="color:#000;letter-spacing:-0.35px">Sales</span></div>
<div class="abs" style="left:388px;top:405px;width:581px;height:1px;background:#464647"></div>
<div class="cb" style="left:396px;top:389px"></div>
<div class="abs" style="left:422px;top:389px;width:25px;height:13px;background:#ffd400"></div>
<div class="t" style="left:422px;top:390px;"><span style="color:#000;letter-spacing:-0.35px">Sales</span>Reason</div>
<div class="abs" style="left:798px;top:389px;width:25px;height:13px;background:#ffd400"></div>
<div class="t" style="left:798px;top:390px;"><span style="color:#000;letter-spacing:-0.35px">Sales</span></div>
<div class="abs" style="left:388px;top:424px;width:581px;height:1px;background:#464647"></div>
<div class="cb" style="left:396px;top:408px"></div>
<div class="abs" style="left:422px;top:408px;width:25px;height:13px;background:#ffd400"></div>
<div class="t" style="left:422px;top:409px;"><span style="color:#000;letter-spacing:-0.35px">Sales</span>TaxRate</div>
<div class="abs" style="left:798px;top:408px;width:25px;height:13px;background:#ffd400"></div>
<div class="t" style="left:798px;top:409px;"><span style="color:#000;letter-spacing:-0.35px">Sales</span></div>
<div class="abs" style="left:388px;top:425px;width:581px;height:18px;background:#0078d4"></div>
<div class="abs" style="left:388px;top:443px;width:581px;height:1px;background:#464647"></div>
<div class="cb" style="left:396px;top:427px;background:#2d2d30"></div>
<div class="abs" style="left:422px;top:427px;width:25px;height:13px;background:#ffd400"></div>
<div class="t" style="left:422px;top:428px;"><span style="color:#000;letter-spacing:-0.35px">Sales</span>Territory</div>
<div class="abs" style="left:798px;top:427px;width:25px;height:13px;background:#ffd400"></div>
<div class="t" style="left:798px;top:428px;"><span style="color:#000;letter-spacing:-0.35px">Sales</span></div>
<div class="abs" style="left:388px;top:462px;width:581px;height:1px;background:#464647"></div>
<div class="cb" style="left:396px;top:446px"></div>
<div class="abs" style="left:422px;top:446px;width:25px;height:13px;background:#ffd400"></div>
<div class="t" style="left:422px;top:447px;"><span style="color:#000;letter-spacing:-0.35px">Sales</span>TerritoryHistory</div>
<div class="abs" style="left:798px;top:446px;width:25px;height:13px;background:#ffd400"></div>
<div class="t" style="left:798px;top:447px;"><span style="color:#000;letter-spacing:-0.35px">Sales</span></div>
<div class="abs" style="left:388px;top:481px;width:581px;height:1px;background:#464647"></div>
<div class="cb" style="left:396px;top:465px"><svg width="13" height="13" viewBox="0 0 13 13"><path d="M2.6 6.8 L4.9 9.6 L10.3 2.8" fill="none" stroke="#9c9c9c" stroke-width="1.7" stroke-linecap="round" stroke-linejoin="round"/></svg></div>
<div class="t" style="left:422px;top:466px;">ShoppingCartItem</div>
<div class="abs" style="left:798px;top:465px;width:25px;height:13px;background:#ffd400"></div>
<div class="t" style="left:798px;top:466px;"><span style="color:#000;letter-spacing:-0.35px">Sales</span></div>
<div class="abs" style="left:388px;top:500px;width:581px;height:1px;background:#464647"></div>
<div class="cb" style="left:396px;top:484px"><svg width="13" height="13" viewBox="0 0 13 13"><path d="M2.6 6.8 L4.9 9.6 L10.3 2.8" fill="none" stroke="#9c9c9c" stroke-width="1.7" stroke-linecap="round" stroke-linejoin="round"/></svg></div>
<div class="t" style="left:422px;top:485px;">SpecialOffer</div>
<div class="abs" style="left:798px;top:484px;width:25px;height:13px;background:#ffd400"></div>
<div class="t" style="left:798px;top:485px;"><span style="color:#000;letter-spacing:-0.35px">Sales</span></div>
<div class="abs" style="left:388px;top:519px;width:581px;height:1px;background:#464647"></div>
<div class="cb" style="left:396px;top:503px"><svg width="13" height="13" viewBox="0 0 13 13"><path d="M2.6 6.8 L4.9 9.6 L10.3 2.8" fill="none" stroke="#9c9c9c" stroke-width="1.7" stroke-linecap="round" stroke-linejoin="round"/></svg></div>
<div class="t" style="left:422px;top:504px;">SpecialOfferProduct</div>
<div class="abs" style="left:798px;top:503px;width:25px;height:13px;background:#ffd400"></div>
<div class="t" style="left:798px;top:504px;"><span style="color:#000;letter-spacing:-0.35px">Sales</span></div>
<div class="abs" style="left:388px;top:538px;width:581px;height:1px;background:#464647"></div>
<div class="cb" style="left:396px;top:522px"><svg width="13" height="13" viewBox="0 0 13 13"><path d="M2.6 6.8 L4.9 9.6 L10.3 2.8" fill="none" stroke="#9c9c9c" stroke-width="1.7" stroke-linecap="round" stroke-linejoin="round"/></svg></div>
<div class="t" style="left:422px;top:523px;">Store</div>
<div class="abs" style="left:798px;top:522px;width:25px;height:13px;background:#ffd400"></div>
<div class="t" style="left:798px;top:523px;"><span style="color:#000;letter-spacing:-0.35px">Sales</span></div>
<div class="abs" style="left:388px;top:425px;width:579px;height:16px;border:1px dotted #fff"></div>
<div class="abs" style="left:387px;top:110px;width:579px;height:44px;border:2px solid #fff"></div>
<div class="abs" style="left:420px;top:292px;width:25px;height:165px;border:2px solid #fff"></div>
<div class="pbtn" style="left:162px;top:682px;width:73px;height:20px"><svg class="abs" style="left:-1px;top:-1px" width="24" height="22" viewBox="0 0 24 22"><path d="M9.6 5.2 C6 4.8 4.6 7.6 5.2 10.2 C5.8 12.6 7.6 13.6 10 13.6 H15.8" fill="none" stroke="#6ab8f5" stroke-width="2"/><path d="M12 9.8 L16 13.6 L12 17.2" fill="none" stroke="#6ab8f5" stroke-width="2"/></svg><span style="position:absolute;left:29px;top:2px">Import</span></div>
<div class="pbtn" style="left:247px;top:682px;width:73px;height:20px"><svg class="abs" style="left:-1px;top:-1px" width="24" height="22" viewBox="0 0 24 22"><path d="M16.6 8.5 H9.5 C6 8.5 4.4 10.8 4.9 13.3 C5.3 15.3 6.8 16.4 8.6 16.8" fill="none" stroke="#6ab8f5" stroke-width="2"/><path d="M12.8 4.6 L16.8 8.5 L12.8 12.3" fill="none" stroke="#6ab8f5" stroke-width="2"/></svg><span style="position:absolute;left:29px;top:2px">Export</span></div>
<div class="t" style="left:769px;top:688px;">Bitwise set:</div>
<div class="box" style="left:829px;top:684px;width:120px;height:18px;background:#252526"></div>
<div class="t" style="left:834px;top:688px;">131962064859645</div>
<svg class="abs" style="left:960px;top:689px" width="11" height="11"><circle cx="5.4" cy="5.4" r="4.1" fill="none" stroke="#28a8f0" stroke-width="1.4"/><rect x="4.8" y="4.9" width="1.3" height="3" fill="#28a8f0"/><rect x="4.8" y="2.8" width="1.3" height="1.2" fill="#28a8f0"/></svg>
<svg class="abs" style="left:0;top:0" width="980" height="718">
<path d="M387 132.5 C372 145 353.5 168 353.5 190 C353.5 220 380 260 418.5 288.5" fill="none" stroke="#fff" stroke-width="2"/>
<path d="M421.8 293.6 L420 287.2 L415.2 292.4 Z" fill="#fff"/>
<path d="M481 89 C490 83 498 81.5 504 81.7 C517 82 528 90 528.3 99 C528.5 102 527.5 104 526 106" fill="none" stroke="#fff" stroke-width="2"/>
<path d="M523.6 110.2 L523.8 103.8 L529.2 107 Z" fill="#fff"/>
</svg>
</body></html>
